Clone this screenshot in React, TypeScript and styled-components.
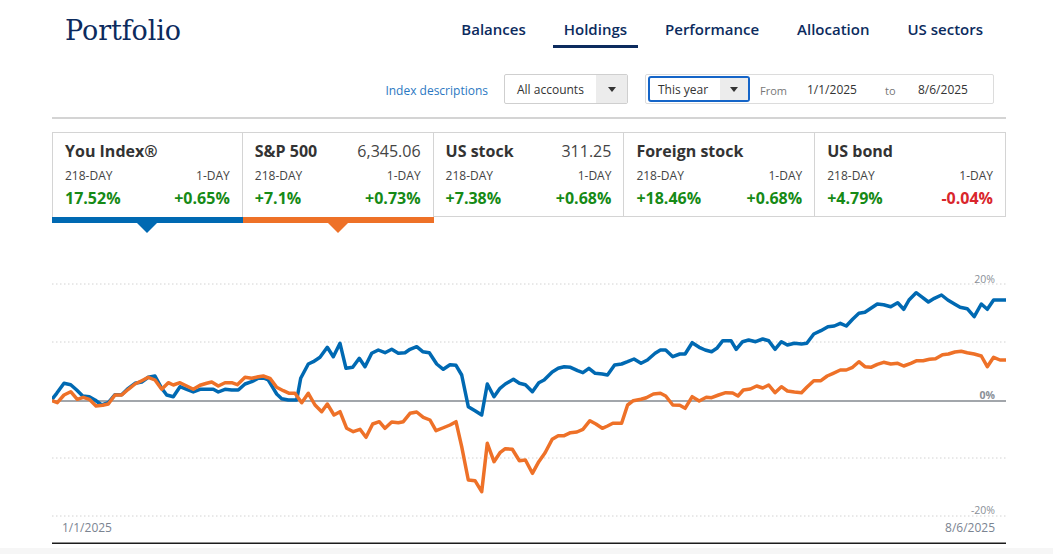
import styled, { createGlobalStyle } from "styled-components";

const GlobalStyle = createGlobalStyle`
  html, body {
    margin: 0;
    padding: 0;
    background: #fff;
  }
  body {
    font-family: "Open Sans", "Liberation Sans", sans-serif;
    color: #333;
  }
`;

const NAVY = "#0c2b5e";
const BLUE = "#0069b2";
const ORANGE = "#ee7128";
const GREEN = "#168a16";
const RED = "#d9262c";

const tabs = ["Balances", "Holdings", "Performance", "Allocation", "US sectors"];

type Stat = {
  name: string;
  price?: string;
  long: string;
  short: string;
  accent?: string;
};

const stats: Stat[] = [
  { name: "You Index®", long: "17.52%", short: "+0.65%", accent: BLUE },
  { name: "S&P 500", price: "6,345.06", long: "+7.1%", short: "+0.73%", accent: ORANGE },
  { name: "US stock", price: "311.25", long: "+7.38%", short: "+0.68%" },
  { name: "Foreign stock", long: "+18.46%", short: "+0.68%" },
  { name: "US bond", long: "+4.79%", short: "-0.04%" },
];

// series are stored in chart pixels (the svg viewBox uses the same space)
const youIndex: [number, number][] = [
  [52, 399.3], [56.7, 393.3], [64, 383.3], [70.7, 384.7], [76.7, 390], [82.7, 396], [89.3, 396.7],
  [95, 400], [101.7, 405], [108.3, 402.7], [115, 394.7], [121.7, 394.7], [128.3, 388.3], [135, 383.3],
  [141.7, 382], [148.3, 377.3], [155, 376], [161.7, 388.3], [166.7, 395], [173.3, 396.7], [180, 386.7],
  [186.7, 389.3], [193.3, 392], [200, 389.3], [213.3, 389.3], [218.3, 392], [225, 389.3], [231.7, 390],
  [238.3, 390], [245, 384], [251.7, 381.7], [258.3, 378.3], [263.3, 378], [268.3, 380], [273.3, 388.3],
  [276.7, 394], [281.7, 398.7], [288.3, 400], [296.7, 400], [300.7, 378.3], [308.3, 364], [313.3, 361.7],
  [320, 357.3], [327.3, 347.3], [333.3, 356.7], [340, 343.3], [346, 368.3], [352.7, 367.3], [359.3, 358.3],
  [365, 366.7], [371.7, 353.3], [378.3, 350], [385, 352.7], [391.7, 349.3], [398.3, 353.3], [405, 352.7],
  [410, 349.3], [416.7, 346.7], [422.7, 351.7], [429.3, 352.7], [436.7, 364], [443.3, 369.3], [450, 364.7],
  [456, 365.3], [461.7, 375], [468.3, 406.7], [475, 410.7], [481.7, 415], [487.3, 384], [494, 396.7],
  [500, 388.3], [505.3, 384], [513.4, 379.3], [519.4, 383.3], [525.4, 384.7], [532.4, 391.7], [538.8, 382.7],
  [544.1, 380], [552.2, 372], [558.2, 368.3], [564.2, 366.7], [570.5, 367.3], [577.6, 370.7], [582.9, 372.7],
  [588.9, 368.3], [595.2, 373.3], [602.3, 374], [607.5, 375], [614.6, 365], [621.6, 364], [627.6, 361.7],
  [634, 359], [641, 363.3], [647.4, 360], [655.1, 353.3], [660.4, 350], [665.7, 350], [672.8, 356.7],
  [679.8, 354], [685.1, 354], [692.2, 342.7], [699.2, 347.3], [705.2, 350], [711.6, 351.7], [716.8, 348.3],
  [722.8, 340.7], [731, 340.7], [736.2, 349.3], [742.6, 341.7], [748.6, 340], [755.6, 341.7], [762.7, 339],
  [768.7, 340.7], [775, 349.3], [781.4, 341.7], [787.4, 345], [794.4, 343.3], [801.5, 344], [806.8, 343.3],
  [813.8, 334], [820.9, 330.7], [827.9, 326.7], [834.3, 326], [840.3, 323.3], [846.3, 326], [852.6, 319.3],
  [858.9, 313.3], [864.9, 312.3], [870.9, 308.3], [877.3, 304], [883.6, 304.7], [890.7, 306.7], [897.7, 302.7],
  [903.7, 309.3], [909, 300], [916.1, 292.7], [922.4, 297.3], [928.4, 302], [934.4, 298.3], [941.5, 295],
  [947.8, 300], [954.9, 304.3], [960.1, 307.3], [967.2, 308.7], [974.2, 316.7], [981.3, 304], [987.3, 309.3],
  [993.6, 300], [1006, 300],
];

const sp500: [number, number][] = [
  [52, 400.7], [57.3, 402.7], [64, 395], [70.7, 391.7], [77.3, 399.3], [83.3, 397.3], [89.3, 399.3],
  [96, 406], [102.7, 405.3], [108.3, 404], [115, 395], [121.7, 395], [128.3, 389.3], [135, 384],
  [141.7, 380.7], [148.3, 377.3], [155, 380], [161.7, 389.3], [168.3, 382.7], [173.3, 385], [180, 382.7],
  [186.7, 386], [193.3, 389.3], [200, 385.3], [206.7, 383.3], [211.7, 382], [218.3, 386], [225, 382.7],
  [231.7, 382.7], [237.3, 384.7], [245, 377.3], [251.7, 378.3], [258.3, 376.7], [263.3, 376], [270, 378.3],
  [276.7, 387.3], [283.3, 390.7], [289.3, 393.3], [295, 393.3], [301.7, 402.7], [308.3, 393.3], [315, 405],
  [321.7, 411.7], [327.3, 404], [334, 415], [340, 411.7], [346.7, 428.3], [353.3, 431.7], [360, 429.3],
  [366, 437.3], [372.7, 424], [379.3, 421.7], [385, 428.3], [391.7, 422], [398.3, 422.7], [403.3, 421.7],
  [410, 413.3], [416.7, 412], [423.3, 417.3], [430, 420], [436, 430.7], [442.7, 428], [450, 425],
  [456, 421.7], [461.7, 446.7], [468.3, 480], [475, 480.7], [481.7, 491.7], [487.3, 443.3], [494, 461.7],
  [500, 452.7], [505.3, 448.7], [512.3, 449.3], [519.4, 460.7], [525.4, 460], [532.4, 473.3], [538.8, 461.7],
  [545.1, 452.7], [552.2, 439.3], [558.2, 435.7], [564.2, 435.7], [570.5, 432.7], [576.9, 432], [582.9, 429.3],
  [589.9, 420.7], [595.9, 424], [602.3, 428.3], [607.5, 426], [612.8, 423.3], [621.6, 423.3], [627.6, 405],
  [633.3, 400.7], [641, 399.3], [646.3, 397.7], [653.4, 394], [660.4, 393.3], [665.7, 396], [672.8, 405],
  [679.8, 405.3], [685.1, 408.3], [692.2, 396.7], [699.2, 401], [706.3, 397.3], [711.6, 397.7], [718.6, 395],
  [725.7, 392.7], [732.7, 393], [738, 396], [743.3, 390], [750.3, 389], [756.7, 386], [762.7, 388],
  [768.7, 385], [775, 392.7], [781.4, 386.7], [787.4, 391], [794.4, 392], [801.5, 392.7], [806.8, 387.3],
  [813.8, 380.7], [820.9, 380.7], [827.2, 376], [833.2, 373.3], [840.3, 370], [846.3, 370], [852.6, 367.3],
  [858.9, 361.7], [864.9, 366.7], [870.9, 367.3], [877.3, 364.3], [883.6, 362.3], [890.7, 364], [897.7, 363.3],
  [903.7, 366], [910.8, 363.3], [916.8, 360.7], [923.1, 360.7], [929.5, 359.3], [935.5, 358.7], [942.5, 354.7],
  [948.5, 354], [954.9, 352], [961.2, 351.3], [967.2, 352.7], [974.2, 354], [981.3, 356], [987.3, 366.7],
  [993.6, 357.3], [1000, 360], [1006, 360],
];

const toPoints = (pts: [number, number][]) => pts.map(([x, y]) => `${x},${y}`).join(" ");

export default function App() {
  return (
    <Page>
      <GlobalStyle />
      <Main>
        <Header>
          <Title>Portfolio</Title>
          <Nav>
            {tabs.map((t) => (
              <Tab key={t} $active={t === "Holdings"}>
                {t}
              </Tab>
            ))}
          </Nav>
        </Header>

        <Controls>
          <IndexLink href="#">Index descriptions</IndexLink>
          <Select>
            <SelectLabel>All accounts</SelectLabel>
            <Caret />
          </Select>
          <RangeBox>
            <RangeSelect>
              <SelectLabel>This year</SelectLabel>
              <Caret />
            </RangeSelect>
            <SmallLabel $width={57}>From</SmallLabel>
            <DateText $width={78}>1/1/2025</DateText>
            <SmallLabel $width={33}>to</SmallLabel>
            <DateText>8/6/2025</DateText>
          </RangeBox>
        </Controls>

        <Divider />

        <Cards>
          {stats.map((s, i) => (
            <Card key={s.name} $first={i === 0} $accent={s.accent}>
              <Row>
                <CardTitle>{s.name}</CardTitle>
                {s.price && <Price>{s.price}</Price>}
              </Row>
              <Row $top={6}>
                <Period>218-DAY</Period>
                <Period>1-DAY</Period>
              </Row>
              <Row $top={4}>
                <Change $down={s.long.startsWith("-")}>{s.long}</Change>
                <Change $down={s.short.startsWith("-")}>{s.short}</Change>
              </Row>
              {s.accent && <Marker $color={s.accent} $first={i === 0} />}
            </Card>
          ))}
        </Cards>

        <Chart viewBox="52 262 954 283" width={954} height={283}>
          {[284, 342, 458, 516].map((y) => (
            <line key={y} x1={52} x2={1006} y1={y} y2={y} stroke="#d2d2d2" strokeWidth={1} strokeDasharray="1.5 2.5" />
          ))}
          <line x1={52} x2={1006} y1={401} y2={401} stroke="#a2a6ab" strokeWidth={2} />
          <AxisText x={995} y={282.5} textAnchor="end">20%</AxisText>
          <AxisText x={995} y={399} textAnchor="end" fill="#6b6f76" fontWeight={700}>0%</AxisText>
          <AxisText x={995} y={514} textAnchor="end">-20%</AxisText>
          <polyline points={toPoints(youIndex)} fill="none" stroke={BLUE} strokeWidth={3.5} strokeLinejoin="round" />
          <polyline points={toPoints(sp500)} fill="none" stroke={ORANGE} strokeWidth={3.5} strokeLinejoin="round" />
          <DateLabel x={62} y={531.5}>1/1/2025</DateLabel>
          <DateLabel x={995} y={531.5} textAnchor="end">8/6/2025</DateLabel>
          <line x1={52} x2={1006} y1={543.3} y2={543.3} stroke="#1c1c1c" strokeWidth={1.5} />
        </Chart>
      </Main>
      <Footer />
    </Page>
  );
}

const Page = styled.div`
  min-height: 100vh;
  display: flex;
  flex-direction: column;
`;

const Main = styled.main`
  width: 954px;
  margin-left: 52px;
`;

const Header = styled.header`
  display: flex;
  justify-content: space-between;
  align-items: flex-start;
  height: 48px;
  padding: 0 12px 0 13px;
`;

const Title = styled.h1`
  margin: 15px 0 0;
  font-family: "DejaVu Serif", "Liberation Serif", serif;
  font-weight: 400;
  font-size: 27px;
  line-height: 32px;
  letter-spacing: -0.1px;
  color: ${NAVY};
`;

const Nav = styled.nav`
  display: flex;
  gap: 16px;
  margin-top: 19px;
`;

const Tab = styled.a<{ $active?: boolean }>`
  padding: 0 11px 6px;
  font-size: 15px;
  line-height: 20px;
  font-weight: 600;
  color: ${NAVY};
  border-bottom: 3px solid ${(p) => (p.$active ? NAVY : "transparent")};
  cursor: pointer;
`;

const Controls = styled.div`
  display: flex;
  justify-content: flex-end;
  align-items: center;
  margin-top: 26px;
  padding-right: 12px;
  height: 30px;
`;

const IndexLink = styled.a`
  margin: 3px 16px 0 0;
  font-size: 12px;
  color: #2b78c2;
  text-decoration: none;
`;

const Select = styled.div`
  display: flex;
  box-sizing: border-box;
  width: 124px;
  height: 30px;
  border: 1px solid #cfcfcf;
  border-radius: 2px;
  overflow: hidden;
`;

const SelectLabel = styled.span`
  flex: 1;
  display: flex;
  align-items: center;
  padding-left: 12px;
  font-size: 12px;
  color: #333;
`;

const Caret = styled.span`
  display: flex;
  align-items: center;
  justify-content: center;
  width: 31px;
  background: #ececec;

  &::after {
    content: "";
    border-left: 4.5px solid transparent;
    border-right: 4.5px solid transparent;
    border-top: 5px solid #333;
  }
`;

const RangeBox = styled.div`
  display: flex;
  align-items: center;
  box-sizing: border-box;
  width: 349px;
  height: 30px;
  margin-left: 17px;
  padding: 1px 2px;
  border: 1px solid #dcdcdc;
  border-radius: 2px;
`;

const RangeSelect = styled.div`
  display: flex;
  box-sizing: border-box;
  width: 102px;
  height: 26px;
  border: 2px solid #1565c8;
  border-radius: 3px;
  overflow: hidden;

  ${SelectLabel} {
    padding-left: 8px;
  }
  ${Caret} {
    width: 28px;
  }
`;

const SmallLabel = styled.span<{ $width: number }>`
  width: ${(p) => p.$width}px;
  box-sizing: border-box;
  padding-left: 0;
  padding-top: 3px;
  font-size: 11px;
  color: #777;
  &:first-of-type {
    padding-left: 10px;
  }
`;

const DateText = styled.span<{ $width?: number }>`
  width: ${(p) => (p.$width ? `${p.$width}px` : "auto")};
  padding-top: 1px;
  font-size: 12px;
  color: #333;
`;

const Divider = styled.hr`
  margin: 13px 0 0;
  border: 0;
  height: 2px;
  background: #d4d4d4;
`;

const Cards = styled.div`
  display: grid;
  grid-template-columns: repeat(5, 1fr);
  margin-top: 13px;
`;

const Card = styled.div<{ $first?: boolean; $accent?: string }>`
  position: relative;
  box-sizing: border-box;
  height: 85px;
  padding: 8px 12px 0 12px;
  border: 1px solid #d4d4d4;
  border-left-width: ${(p) => (p.$first ? 1 : 0)}px;
  border-bottom-width: ${(p) => (p.$accent ? 0 : 1)}px;
`;

const Row = styled.div<{ $top?: number }>`
  display: flex;
  justify-content: space-between;
  align-items: baseline;
  margin-top: ${(p) => p.$top ?? 0}px;
`;

const CardTitle = styled.span`
  font-size: 16px;
  line-height: 21px;
  font-weight: 700;
  color: #333;
`;

const Price = styled.span`
  font-size: 16px;
  line-height: 21px;
  color: #444;
`;

const Period = styled.span`
  font-size: 12px;
  line-height: 16px;
  color: #444;
`;

const Change = styled.span<{ $down?: boolean }>`
  font-size: 16px;
  line-height: 21px;
  font-weight: 700;
  color: ${(p) => (p.$down ? RED : GREEN)};
`;

const Marker = styled.span<{ $color: string; $first?: boolean }>`
  position: absolute;
  left: ${(p) => (p.$first ? -1 : 0)}px;
  right: -1px;
  bottom: -6px;
  height: 6px;
  background: ${(p) => p.$color};

  &::after {
    content: "";
    position: absolute;
    top: 6px;
    left: 50%;
    margin-left: -10px;
    border-left: 10px solid transparent;
    border-right: 10px solid transparent;
    border-top: 10px solid ${(p) => p.$color};
  }
`;

const Chart = styled.svg`
  display: block;
  margin-top: 45px;
  font-family: "Open Sans", "Liberation Sans", sans-serif;
`;

const AxisText = styled.text`
  font-size: 10.5px;
  fill: #8a8f97;
`;

const DateLabel = styled.text`
  font-size: 12px;
  fill: #7b8491;
`;

const Footer = styled.footer`
  flex: 1;
  min-height: 6px;
  margin-top: 3px;
  background: #f6f6f6;
`;
